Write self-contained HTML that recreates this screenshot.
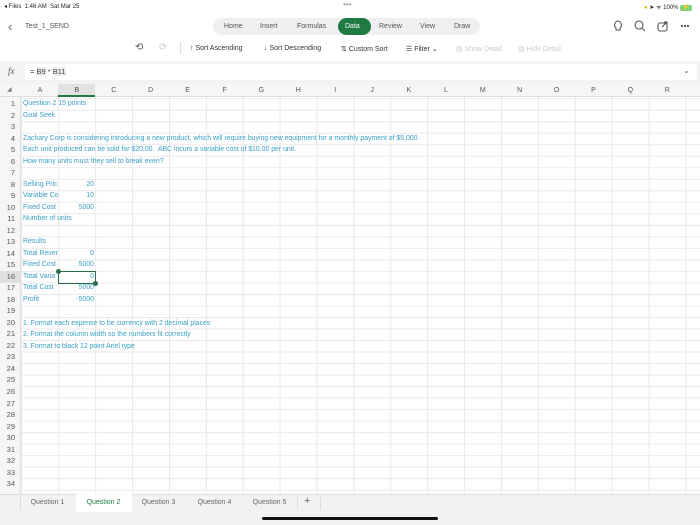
<!DOCTYPE html><html><head><style>
*{margin:0;padding:0;box-sizing:border-box}
body{width:700px;height:525px;overflow:hidden;background:#fff;font-family:"Liberation Sans",sans-serif;position:relative;color:#222}
.a{position:absolute;white-space:nowrap}
.grid{position:absolute;left:21px;top:97px;width:679px;height:397px;
background-image:linear-gradient(to right,#e9e9e9 1px,transparent 1px),linear-gradient(to bottom,#e9e9e9 1px,transparent 1px);
background-size:36.9px 100%,100% 11.52px;background-position:0.4px 0,0 1.2px}
.rh{position:absolute;left:0;width:21px;top:97px;height:397px;background:#f6f6f6;border-right:1px solid #ddd}
.rn{position:absolute;left:0;width:15px;text-align:right;font-size:7.5px;color:#555}
.ch{position:absolute;top:84px;height:13px;font-size:7px;color:#555;text-align:center;line-height:13px;width:37px}
.c{position:absolute;font-size:6.9px;color:#3a9fc4;line-height:11.5px}
.tb{font-size:7px;color:#333}
.tab{position:absolute;top:494px;height:18px;line-height:18px;font-size:7px;color:#666;text-align:center;width:55px}
</style></head><body>
<div class="a" style="left:4px;top:3px;font-size:6px;color:#222">◂ Files&nbsp; 1:46 AM&nbsp; Sat Mar 25</div>
<div class="a" style="left:343px;top:0px;font-size:8px;color:#999">•••</div>
<div class="a" style="left:644px;top:3px;font-size:6px;color:#222"><span style="color:#e8b200">●</span> ➤ ᯤ 100% <span style="background:#7ad27a;padding:0 2px;border-radius:2px">⚡</span></div>
<div class="a" style="left:8px;top:19px;font-size:13px;color:#666">‹</div>
<div class="a" style="left:25px;top:23px;font-size:7px;color:#555">Test_1_SEND</div>
<div class="a" style="left:213px;top:18px;width:267px;height:17px;background:#efefef;border-radius:9px"></div>
<div class="a" style="left:338px;top:18px;width:33px;height:17px;background:#1f7a43;border-radius:9px"></div>
<div class="a tb" style="left:224px;top:23px;color:#555">Home</div>
<div class="a tb" style="left:260px;top:23px;color:#555">Insert</div>
<div class="a tb" style="left:297px;top:23px;color:#555">Formulas</div>
<div class="a tb" style="left:345px;top:23px;color:#fff">Data</div>
<div class="a tb" style="left:379px;top:23px;color:#555">Review</div>
<div class="a tb" style="left:420px;top:23px;color:#555">View</div>
<div class="a tb" style="left:454px;top:23px;color:#555">Draw</div>
<svg class="a" style="left:612px;top:19px" width="80" height="14" fill="none" stroke="#555" stroke-width="1.1">
<path d="M6 2a4 4 0 0 1 2 7v2h-4v-2a4 4 0 0 1 2-7z"/><circle cx="27" cy="6" r="4"/><path d="M30 9l3 3"/><rect x="46" y="4" width="9" height="8" rx="2"/><path d="M50 8l5-5M52 3h3v3"/><circle cx="70" cy="7" r=".6"/><circle cx="73" cy="7" r=".6"/><circle cx="76" cy="7" r=".6"/></svg>
<div class="a" style="left:135px;top:42px;font-size:10px;color:#555">⟲</div>
<div class="a" style="left:159px;top:42px;font-size:10px;color:#ccc">⟳</div>
<div class="a" style="left:180px;top:42px;width:1px;height:12px;background:#ddd"></div>
<div class="a tb" style="left:190px;top:45px">↑ Sort Ascending</div>
<div class="a tb" style="left:264px;top:45px">↓ Sort Descending</div>
<div class="a tb" style="left:341px;top:45px">⇅ Custom Sort</div>
<div class="a tb" style="left:406px;top:45px">☰ Filter ⌄</div>
<div class="a tb" style="left:456px;top:45px;color:#ccc">▤ Show Detail</div>
<div class="a tb" style="left:518px;top:45px;color:#ccc">▤ Hide Detail</div>
<div class="a" style="left:0;top:61px;width:700px;height:23px;background:#f3f3f3"></div>
<div class="a" style="left:25px;top:64px;width:672px;height:16px;background:#fff;border-radius:3px"></div>
<div class="a" style="left:8px;top:66px;font-size:9px;font-style:italic;font-family:'Liberation Serif',serif;color:#555">fx</div>
<div class="a" style="left:30px;top:67px;font-size:7.5px;color:#444">= <span style="background:#eee">B9</span> * <span style="background:#eee">B11</span></div>
<div class="a" style="left:683px;top:66px;font-size:8px;color:#666">⌄</div>
<div class="a" style="left:0;top:84px;width:700px;height:13px;background:#f6f6f6;border-bottom:1px solid #ddd"></div>
<div class="a" style="left:58px;top:84px;width:37px;height:13px;background:#e2e2e2;border-bottom:2px solid #1f7a43"></div>
<div class="a" style="left:7px;top:86px;font-size:6px;color:#777">◢</div>
<div class="grid"></div>
<div class="rh"></div>
<div class="a" style="left:0;top:271px;width:21px;height:11.5px;background:#e0e0e0"></div>
<div id="cols"></div><div id="rows"></div>
<script>
var L="ABCDEFGHIJKLMNOPQR",h="";for(var i=0;i<18;i++)h+='<div class="ch" style="left:'+(21.5+i*36.9)+'px">'+L[i]+'</div>';document.getElementById("cols").outerHTML=h;
h="";for(var r=1;r<=34;r++)h+='<div class="rn" style="top:'+(99+(r-1)*11.52)+'px">'+r+'</div>';document.getElementById("rows").outerHTML=h;
</script>
<div class="c" style="left:23px;top:98px">Question 2 15 points</div>
<div class="c" style="left:23px;top:110px">Goal Seek</div>
<div class="c" style="left:23px;top:133px">Zachary Corp is considering introducing a new product, which will require buying new equipment for a monthly payment of $5,000.</div>
<div class="c" style="left:23px;top:144px">Each unit produced can be sold for $20.00.&nbsp; ABC incurs a variable cost of $10.00 per unit.</div>
<div class="c" style="left:23px;top:156px">How many units must they sell to break even?</div>
<div class="c" style="left:23px;top:179px">Selling Pric</div>
<div class="c" style="left:23px;top:190px">Variable Co</div>
<div class="c" style="left:23px;top:202px">Fixed Cost</div>
<div class="c" style="left:23px;top:213px">Number of units</div>
<div class="c" style="left:23px;top:236px">Results</div>
<div class="c" style="left:23px;top:248px">Total Rever</div>
<div class="c" style="left:23px;top:259px">Fixed Cost</div>
<div class="c" style="left:23px;top:271px;width:35px;overflow:hidden">Total Varia</div>
<div class="c" style="left:23px;top:282px">Total Cost</div>
<div class="c" style="left:23px;top:294px">Profit</div>
<div class="c" style="left:58px;width:36px;text-align:right;top:179px">20</div>
<div class="c" style="left:58px;width:36px;text-align:right;top:190px">10</div>
<div class="c" style="left:58px;width:36px;text-align:right;top:202px">5000</div>
<div class="c" style="left:58px;width:36px;text-align:right;top:248px">0</div>
<div class="c" style="left:58px;width:36px;text-align:right;top:259px">5000</div>
<div class="c" style="left:58px;width:36px;text-align:right;top:271px">0</div>
<div class="c" style="left:58px;width:36px;text-align:right;top:282px">5000</div>
<div class="c" style="left:58px;width:36px;text-align:right;top:294px">-5000</div>
<div class="c" style="left:23px;top:318px">1. Format each expense to be currency with 2 decimal places</div>
<div class="c" style="left:23px;top:329px">2. Format the column width so the numbers fit correctly</div>
<div class="c" style="left:23px;top:341px">3. Format to black 12 point Ariel type</div>
<div class="a" style="left:58px;top:271px;width:38px;height:12.5px;border:1.5px solid #2a6f47"></div>
<div class="a" style="left:56px;top:269px;width:5px;height:5px;border-radius:50%;background:#2a6f47"></div>
<div class="a" style="left:93px;top:281px;width:5px;height:5px;border-radius:50%;background:#2a6f47"></div>
<div class="a" style="left:0;top:494px;width:700px;height:31px;background:#f2f2f2;border-top:1px solid #ddd"></div>
<div class="a" style="left:76px;top:494px;width:56px;height:18px;background:#fff"></div>
<div class="a" style="left:20px;top:496px;width:1px;height:14px;background:#ddd"></div>
<div class="tab" style="left:20px">Question 1</div>
<div class="tab" style="left:76px;color:#1f7a43">Question 2</div>
<div class="tab" style="left:131px">Question 3</div>
<div class="tab" style="left:187px">Question 4</div>
<div class="tab" style="left:242px">Question 5</div>
<div class="a" style="left:297px;top:496px;width:1px;height:14px;background:#ddd"></div>
<div class="a" style="left:320px;top:496px;width:1px;height:14px;background:#ddd"></div>
<div class="a" style="left:304px;top:495px;font-size:11px;color:#666">+</div>
<div class="a" style="left:262px;top:517px;width:176px;height:3px;border-radius:2px;background:#111"></div>
</body></html>
